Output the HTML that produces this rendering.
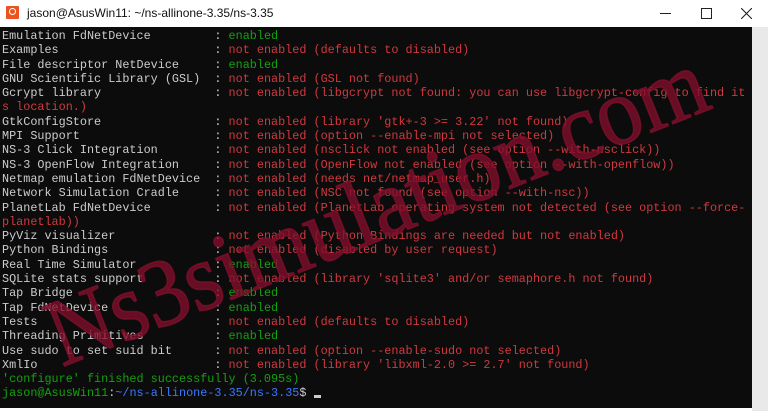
<!DOCTYPE html>
<html><head><meta charset="utf-8"><style>
html,body{margin:0;padding:0;width:768px;height:411px;overflow:hidden;background:#f0f0f0;}
.win{position:absolute;left:0;top:0;width:768px;height:411px;background:#fff;}
.title{position:absolute;left:0;top:0;width:768px;height:27px;background:#fff;font-family:"Liberation Sans",sans-serif;font-size:12px;color:#111;}
.title .t{position:absolute;left:27px;top:6px;}
.icon{position:absolute;left:6px;top:6px;width:13px;height:13px;background:#e95420;border-radius:1px;}
.icon:after{content:"";position:absolute;left:3px;top:2px;width:5px;height:5px;border:1px solid #fff;border-radius:50%;}
.term{position:absolute;left:0;top:27px;width:752px;height:381px;background:#0c0c0c;overflow:hidden;}
.sb{position:absolute;left:752px;top:27px;width:16px;height:384px;background:#e9e9e9;}
pre{margin:0;position:absolute;left:2px;top:2px;font-family:"Liberation Mono",monospace;font-size:11.8px;line-height:14.3px;color:#cccccc;}
.g{color:#13a10e}.r{color:#d0393f}.b{color:#3b78ff}
svg.wm{position:absolute;left:0;top:0;}
</style></head><body><div class="win">
<div class="title"><div class="icon"></div><span class="t">jason@AsusWin11: ~/ns-allinone-3.35/ns-3.35</span>
<div style="position:absolute;left:660px;top:13px;width:11px;height:1px;background:#222"></div>
<div style="position:absolute;left:701px;top:8px;width:9px;height:9px;border:1px solid #222"></div>
<svg style="position:absolute;left:741px;top:8px" width="11" height="11"><path d="M0 0L11 11M11 0L0 11" stroke="#222" stroke-width="1.1"/></svg>
</div>
<div class="term">
<pre>Emulation FdNetDevice         : <span class="g">enabled</span>
Examples                      : <span class="r">not enabled (defaults to disabled)</span>
File descriptor NetDevice     : <span class="g">enabled</span>
GNU Scientific Library (GSL)  : <span class="r">not enabled (GSL not found)</span>
Gcrypt library                : <span class="r">not enabled (libgcrypt not found: you can use libgcrypt-config to find it
s location.)</span>
GtkConfigStore                : <span class="r">not enabled (library 'gtk+-3 &gt;= 3.22' not found)</span>
MPI Support                   : <span class="r">not enabled (option --enable-mpi not selected)</span>
NS-3 Click Integration        : <span class="r">not enabled (nsclick not enabled (see option --with-nsclick))</span>
NS-3 OpenFlow Integration     : <span class="r">not enabled (OpenFlow not enabled (see option --with-openflow))</span>
Netmap emulation FdNetDevice  : <span class="r">not enabled (needs net/netmap_user.h)</span>
Network Simulation Cradle     : <span class="r">not enabled (NSC not found (see option --with-nsc))</span>
PlanetLab FdNetDevice         : <span class="r">not enabled (PlanetLab operating system not detected (see option --force-
planetlab))</span>
PyViz visualizer              : <span class="r">not enabled (Python Bindings are needed but not enabled)</span>
Python Bindings               : <span class="r">not enabled (disabled by user request)</span>
Real Time Simulator           : <span class="g">enabled</span>
SQLite stats support          : <span class="r">not enabled (library 'sqlite3' and/or semaphore.h not found)</span>
Tap Bridge                    : <span class="g">enabled</span>
Tap FdNetDevice               : <span class="g">enabled</span>
Tests                         : <span class="r">not enabled (defaults to disabled)</span>
Threading Primitives          : <span class="g">enabled</span>
Use sudo to set suid bit      : <span class="r">not enabled (option --enable-sudo not selected)</span>
XmlIo                         : <span class="r">not enabled (library 'libxml-2.0 &gt;= 2.7' not found)</span>
<span class="g">'configure' finished successfully (3.095s)</span>
<span class="g">jason@AsusWin11</span>:<span class="b">~/ns-allinone-3.35/ns-3.35</span>$ <span style="display:inline-block;width:7px;height:3px;background:#ccc;vertical-align:-2px"></span></pre>
<svg class="wm" width="752" height="381"><text x="62" y="340" transform="rotate(-21.7 62 340)" font-family="Liberation Serif, serif" font-size="96" textLength="702" lengthAdjust="spacingAndGlyphs" fill="rgba(130,15,45,0.78)" stroke="rgba(130,15,45,0.78)" stroke-width="1.5">Ns3simulation.com</text></svg>
</div>
<div class="sb"></div>
</div></body></html>
